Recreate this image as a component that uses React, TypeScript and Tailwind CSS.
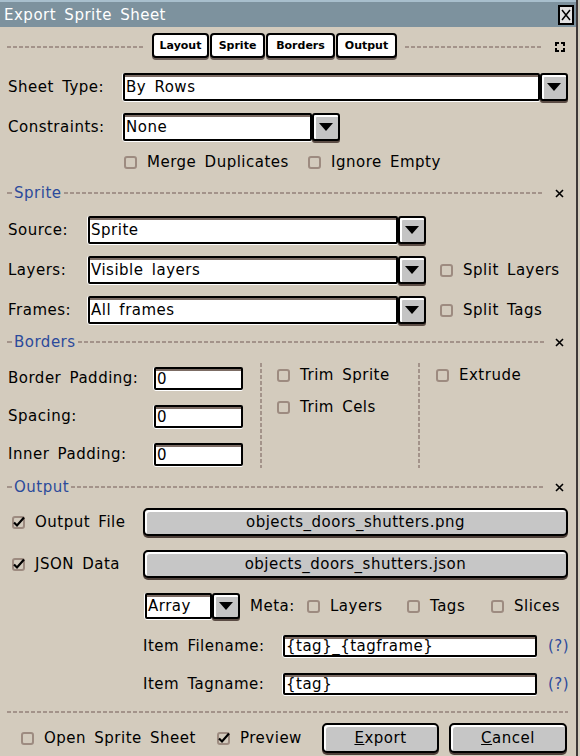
import type { ReactNode } from 'react';

// Aseprite-style "Export Sprite Sheet" dialog

function Dashes({ className = '' }: { className?: string }) {
    return (
        <div
            className={`h-[2px] bg-[repeating-linear-gradient(90deg,#a3938a_0_4px,transparent_4px_6px)] ${className}`}
        />
    );
}

function VDashes() {
    return <div className="w-[2px] self-stretch bg-[repeating-linear-gradient(180deg,#a3938a_0_4px,transparent_4px_6px)]" />;
}

function SmallX() {
    return (
        <svg width="9" height="9" viewBox="0 0 9 9" className="shrink-0">
            <path d="M1 1L8 8M8 1L1 8" stroke="#000" strokeWidth="1.6" />
        </svg>
    );
}

function ExpandIcon() {
    return (
        <svg width="10" height="10" viewBox="0 0 10 10" className="shrink-0">
            <path
                d="M0 0H4V2H2V4H0ZM6 0H10V4H8V2H6ZM0 6H2V8H4V10H0ZM8 6H10V10H6V8H8Z"
                fill="#000"
            />
        </svg>
    );
}

function Check({ checked = false }: { checked?: boolean }) {
    return (
        <svg width="13" height="13" viewBox="0 0 13 13" className="shrink-0 overflow-visible">
            <rect x="1" y="1" width="11" height="11" rx="2" fill="none" stroke="#9d8b80" strokeWidth="2" />
            {checked && (
                <path d="M2 6.5L5 9.5L12 1.5" fill="none" stroke="#000" strokeWidth="2.2" />
            )}
        </svg>
    );
}

function CheckItem({ label, checked, className = '' }: { label: string; checked?: boolean; className?: string }) {
    return (
        <div className={`flex items-center gap-[10px] ${className}`}>
            <Check checked={checked} />
            <span className="whitespace-nowrap">{label}</span>
        </div>
    );
}

function Field({ value, className = '' }: { value: string; className?: string }) {
    return (
        <div
            className={`flex h-full items-center overflow-hidden whitespace-nowrap rounded-[2px] border-2 border-black bg-white pl-[1px] pt-[1px] shadow-[inset_0_2px_0_#7c6c64,0_1px_0_#fff,-1px_0_0_#fff] ${className}`}
        >
            {value}
        </div>
    );
}

function Combo({ value, className = '' }: { value: string; className?: string }) {
    return (
        <div className={`flex h-full ${className}`}>
            <Field value={value} className="flex-1" />
            <div className="flex h-full w-[28px] shrink-0 items-center justify-center rounded-[3px] border-2 border-black bg-[#c4c4c4] shadow-[inset_2px_2px_0_#fff,0_2px_0_#5b4c45]">
                <svg width="14" height="8" viewBox="0 0 14 8">
                    <path d="M0 0H14L7 8Z" fill="#000" />
                </svg>
            </div>
        </div>
    );
}

function Btn({ children, className = '' }: { children: ReactNode; className?: string }) {
    return (
        <div
            className={`flex items-center justify-center whitespace-nowrap rounded-[5px] border-2 border-black bg-[#c6c6c6] shadow-[inset_2px_2px_0_#fff,0_2px_0_#4d3f39] ${className}`}
        >
            {children}
        </div>
    );
}

function Tab({ label, className = '' }: { label: string; className?: string }) {
    return (
        <div
            className={`flex h-[25px] items-center justify-center rounded-[4px] border-2 border-black bg-white text-[11px] font-bold tracking-normal shadow-[0_2px_0_#6b5e58] [word-spacing:0] ${className}`}
        >
            {label}
        </div>
    );
}

function Section({ title }: { title: string }) {
    return (
        <div className="flex h-[14px] shrink-0 items-center pl-[7px] pr-[12px]">
            <div className="h-[2px] w-[5px] bg-[#a3938a]" />
            <span className="px-[2px] text-[#2b4a9b]">{title}</span>
            <Dashes className="flex-1" />
            <div className="ml-[11px]">
                <SmallX />
            </div>
        </div>
    );
}

export default function App() {
    return (
        <div className="h-[756px] w-[580px] overflow-hidden bg-[#d3cbbd] font-['DejaVu_Sans',sans-serif] text-[15px] leading-none tracking-[0.5px] text-black [word-spacing:3px]">
            <div className="flex h-full w-[578px] flex-col border-r-2 border-[#3d3838]">
                {/* ── Title bar ─────────────────────────────────────────── */}
                <div className="flex h-[27px] shrink-0 items-center justify-between border-t-2 border-[#a8bfcd] bg-[#7d929e] pl-[4px] pr-[2px]">
                    <span className="pt-[1px] text-white">Export Sprite Sheet</span>
                    <div className="flex h-[20px] w-[16px] items-center justify-center border-2 border-black bg-[#e2e2e2]">
                        <svg width="10" height="12" viewBox="0 0 10 12">
                            <path d="M1 1L9 11M9 1L1 11" stroke="#000" strokeWidth="1.5" />
                        </svg>
                    </div>
                </div>

                {/* ── Tabs ──────────────────────────────────────────────── */}
                <div className="mt-[6px] flex h-[27px] shrink-0 items-center pl-[7px] pr-[11px]">
                    <Dashes className="w-[136px]" />
                    <div className="ml-[9px] flex gap-[1px] self-start">
                        <Tab label="Layout" className="w-[57px]" />
                        <Tab label="Sprite" className="w-[55px]" />
                        <Tab label="Borders" className="w-[69px]" />
                        <Tab label="Output" className="w-[61px]" />
                    </div>
                    <Dashes className="ml-[8px] w-[136px]" />
                    <div className="ml-auto">
                        <ExpandIcon />
                    </div>
                </div>

                {/* ── Layout ────────────────────────────────────────────── */}
                <div className="mt-[13px] flex h-[28px] shrink-0 items-center pl-[8px] pr-[8px]">
                    <span className="w-[115px] shrink-0">Sheet Type:</span>
                    <Combo value="By Rows" className="flex-1" />
                </div>
                <div className="mt-[12px] flex h-[28px] shrink-0 items-center pl-[8px]">
                    <span className="w-[115px] shrink-0">Constraints:</span>
                    <Combo value="None" className="w-[217px]" />
                </div>
                <div className="mt-[11px] flex h-[20px] shrink-0 items-center pl-[124px]">
                    <CheckItem label="Merge Duplicates" className="w-[184px]" />
                    <CheckItem label="Ignore Empty" />
                </div>

                {/* ── Sprite ────────────────────────────────────────────── */}
                <div className="mt-[14px]">
                    <Section title="Sprite" />
                </div>
                <div className="mt-[16px] flex h-[28px] shrink-0 items-center pl-[8px]">
                    <span className="w-[80px] shrink-0">Source:</span>
                    <Combo value="Sprite" className="w-[338px]" />
                </div>
                <div className="mt-[12px] flex h-[28px] shrink-0 items-center pl-[8px]">
                    <span className="w-[80px] shrink-0">Layers:</span>
                    <Combo value="Visible layers" className="w-[338px]" />
                    <CheckItem label="Split Layers" className="ml-[14px]" />
                </div>
                <div className="mt-[12px] flex h-[28px] shrink-0 items-center pl-[8px]">
                    <span className="w-[80px] shrink-0">Frames:</span>
                    <Combo value="All frames" className="w-[338px]" />
                    <CheckItem label="Split Tags" className="ml-[14px]" />
                </div>

                {/* ── Borders ───────────────────────────────────────────── */}
                <div className="mt-[11px]">
                    <Section title="Borders" />
                </div>
                <div className="mt-[14px] flex h-[105px] shrink-0 pl-[8px]">
                    <div className="flex w-[252px] flex-col gap-[15px] pt-[4px]">
                        {['Border Padding:', 'Spacing:', 'Inner Padding:'].map((label) => (
                            <div key={label} className="flex h-[23px] items-center">
                                <span className="w-[146px] shrink-0">{label}</span>
                                <Field value="0" className="w-[89px]" />
                            </div>
                        ))}
                    </div>
                    <VDashes />
                    <div className="flex w-[156px] flex-col gap-[12px] pl-[15px] pt-[2px]">
                        <CheckItem label="Trim Sprite" className="h-[20px]" />
                        <CheckItem label="Trim Cels" className="h-[20px]" />
                    </div>
                    <VDashes />
                    <div className="flex flex-col pl-[16px] pt-[2px]">
                        <CheckItem label="Extrude" className="h-[20px]" />
                    </div>
                </div>

                {/* ── Output ────────────────────────────────────────────── */}
                <div className="mt-[12px]">
                    <Section title="Output" />
                </div>
                <div className="mt-[14px] flex h-[28px] shrink-0 items-center pl-[12px] pr-[8px]">
                    <CheckItem label="Output File" checked className="w-[131px] shrink-0" />
                    <Btn className="h-full flex-1">objects_doors_shutters.png</Btn>
                </div>
                <div className="mt-[14px] flex h-[28px] shrink-0 items-center pl-[12px] pr-[8px]">
                    <CheckItem label="JSON Data" checked className="w-[131px] shrink-0" />
                    <Btn className="h-full flex-1">objects_doors_shutters.json</Btn>
                </div>
                <div className="mt-[15px] flex h-[26px] shrink-0 items-center pl-[145px]">
                    <Combo value="Array" className="w-[95px]" />
                    <span className="ml-[10px] w-[57px] shrink-0">Meta:</span>
                    <CheckItem label="Layers" className="w-[100px]" />
                    <CheckItem label="Tags" className="w-[84px]" />
                    <CheckItem label="Slices" />
                </div>
                <div className="mt-[16px] flex h-[22px] shrink-0 items-center pl-[143px]">
                    <span className="w-[140px] shrink-0">Item Filename:</span>
                    <Field value="{tag}_{tagframe}" className="w-[254px]" />
                    <span className="ml-[11px] text-[#2b4a9b]">(?)</span>
                </div>
                <div className="mt-[16px] flex h-[22px] shrink-0 items-center pl-[143px]">
                    <span className="w-[140px] shrink-0">Item Tagname:</span>
                    <Field value="{tag}" className="w-[254px]" />
                    <span className="ml-[11px] text-[#2b4a9b]">(?)</span>
                </div>

                {/* ── Footer ────────────────────────────────────────────── */}
                <div className="mt-[10px] flex h-[14px] shrink-0 items-center pl-[7px] pr-[8px]">
                    <Dashes className="flex-1" />
                </div>
                <div className="mt-[4px] flex h-[30px] shrink-0 items-center pl-[21px]">
                    <CheckItem label="Open Sprite Sheet" className="w-[196px] shrink-0" />
                    <CheckItem label="Preview" checked className="w-[105px] shrink-0" />
                    <Btn className="h-full w-[117px]">
                        <span className="underline">E</span>xport
                    </Btn>
                    <Btn className="ml-[10px] h-full w-[118px]">
                        <span className="underline">C</span>ancel
                    </Btn>
                </div>
            </div>
        </div>
    );
}
